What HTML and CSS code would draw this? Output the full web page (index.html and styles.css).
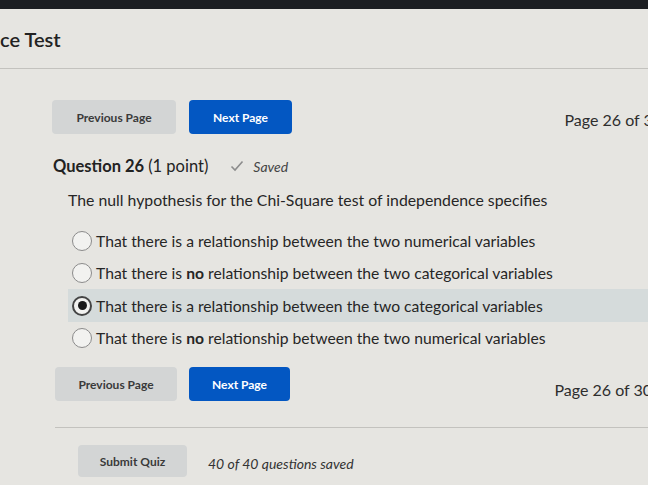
FILE: index.html
```html
<!DOCTYPE html>
<html>
<head>
<meta charset="utf-8">
<link rel="stylesheet" href="styles.css">
</head>
<body>
<div class="topbar"></div>
<header class="header"><h1 class="title">ce Test</h1></header>
<div class="divider"></div>
<div class="nav nav-top">
  <button class="btn btn-prev">Previous Page</button>
  <button class="btn btn-next">Next Page</button>
  <span class="page-label">Page 26 of 30</span>
</div>
<section class="question">
  <h2 class="q-head">Question 26 <span class="q-points">(1 point)</span>
    <span class="saved"><svg class="check" viewBox="0 0 14 12" width="14" height="12"><path d="M1.5 6.5 L5 10 L12.5 1.5" fill="none" stroke="#8c8c8c" stroke-width="1.6"/></svg><em>Saved</em></span>
  </h2>
  <p class="q-text">The null hypothesis for the Chi-Square test of independence specifies</p>
  <ul class="options">
    <li class="opt"><span class="radio"></span><span class="opt-text">That there is a relationship between the two numerical variables</span></li>
    <li class="opt"><span class="radio"></span><span class="opt-text">That there is <b>no</b> relationship between the two categorical variables</span></li>
    <li class="opt selected"><span class="radio on"></span><span class="opt-text">That there is a relationship between the two categorical variables</span></li>
    <li class="opt"><span class="radio"></span><span class="opt-text">That there is <b>no</b> relationship between the two numerical variables</span></li>
  </ul>
</section>
<div class="nav nav-bottom">
  <button class="btn btn-prev">Previous Page</button>
  <button class="btn btn-next">Next Page</button>
  <span class="page-label">Page 26 of 30</span>
</div>
<div class="divider divider-bottom"></div>
<div class="submit-row">
  <button class="btn btn-submit">Submit Quiz</button>
  <em class="saved-count">40 of 40 questions saved</em>
</div>
</body>
</html>
```

FILE: styles.css
```css
html, body {
  margin: 0;
  padding: 0;
  width: 648px;
  height: 485px;
  overflow: hidden;
}
body {
  background: #e6e5e1;
  font-family: Lato, "Open Sans", sans-serif;
  color: #262626;
}
.topbar {
  height: 9px;
  background: #1c1e22;
}
.header {
  height: 59px;
  display: flex;
  align-items: flex-start;
}
.title {
  margin: 18px 0 0 0;
  font-size: 20px;
  font-weight: 600;
  color: #222;
}
.divider {
  height: 1px;
  background: #c3c2be;
}
.nav {
  display: flex;
  align-items: center;
}
.nav-top {
  margin-top: 31px;
  padding-left: 52px;
}
.btn {
  font-family: Lato, sans-serif;
  font-weight: 700;
  font-size: 12px;
  border: none;
  border-radius: 4px;
  height: 34px;
  padding: 0;
  cursor: pointer;
}
.btn-prev {
  width: 124px;
  background: #d3d5d5;
  color: #3a3a3a;
}
.btn-next {
  width: 103px;
  margin-left: 13px;
  background: #0357c2;
  color: #fff;
}
.page-label {
  margin-left: auto;
  margin-right: -14px;
  font-size: 16px;
  color: #2e2e2e;
  padding-top: 4px;
}
.question {
  padding-left: 53px;
}
.q-head {
  margin: 22px 0 0 0;
  font-size: 16.5px;
  font-weight: 700;
  display: flex;
  align-items: baseline;
  color: #222;
}
.q-points {
  font-weight: 400;
  margin-left: 4px;
}
.saved {
  margin-left: 22px;
  font-size: 14px;
  font-weight: 400;
  color: #444;
  display: inline-flex;
  align-items: center;
  gap: 9px;
}
.check { display: block; }
.q-text {
  margin: 14px 0 0 15px;
  font-size: 15.8px;
}
.options {
  list-style: none;
  margin: 16px 0 0 15px;
  padding: 0;
}
.opt {
  display: flex;
  align-items: center;
  height: 32px;
  padding-left: 4px;
  font-size: 15.7px;
  color: #262626;
}
.opt b { font-weight: 700; }
.selected {
  background: #d5dbdb;
  height: 33px;
}
.radio {
  width: 20px;
  height: 20px;
  border: 1.5px solid #8b8b8b;
  border-radius: 50%;
  background: #f2f2f0;
  margin-right: 4px;
  box-sizing: border-box;
  display: flex;
  align-items: center;
  justify-content: center;
  flex: none;
}
.radio.on {
  border: 2px solid #444;
}
.radio.on::after {
  content: "";
  width: 9px;
  height: 9px;
  border-radius: 50%;
  background: #1a1a1a;
}
.nav-bottom {
  margin-top: 13px;
  padding-left: 55px;
}
.nav-bottom .btn-prev { width: 122px; }
.nav-bottom .btn-next { width: 101px; margin-left: 12px; }
.nav-bottom .page-label { margin-right: -4px; padding-top: 10px; }
.divider-bottom {
  margin: 26px 0 0 55px;
}
.submit-row {
  display: flex;
  align-items: center;
  padding-left: 78px;
  margin-top: 17px;
}
.btn-submit {
  width: 109px;
  height: 32px;
  background: #d3d5d5;
  color: #3a3a3a;
}
.saved-count {
  margin-left: 21px;
  font-size: 14px;
  color: #333;
  padding-top: 5px;
}
```
